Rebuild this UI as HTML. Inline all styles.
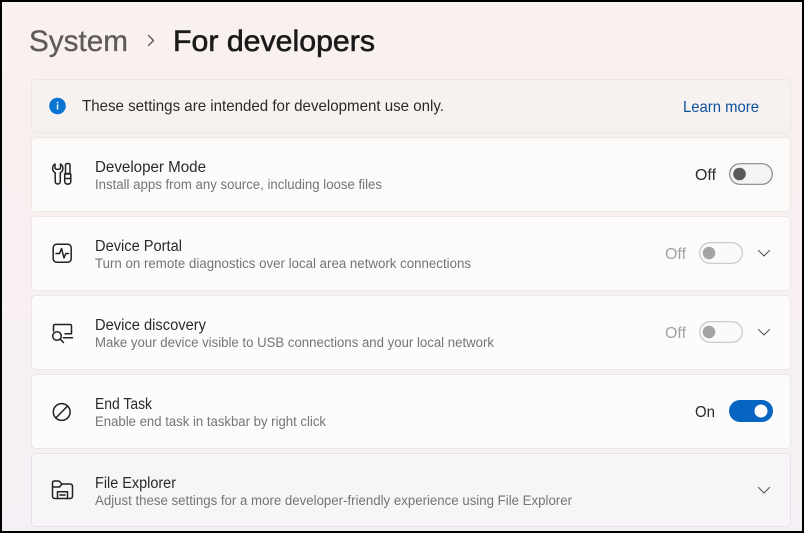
<!DOCTYPE html>
<html><head><meta charset="utf-8">
<style>
html,body{margin:0;padding:0;width:804px;height:533px;overflow:hidden;background:#000}
svg{display:block}
text{font-family:"Liberation Sans",sans-serif}
.t{font-size:15.500px;fill:#2a2a2a}
.s{font-size:13.500px;fill:#757575}
.i{fill:none;stroke:#222;stroke-width:1.500;stroke-linecap:round;stroke-linejoin:round}
.c{fill:none;stroke:#555;stroke-width:1.100;stroke-linecap:round;stroke-linejoin:round}
</style></head><body>
<svg width="804" height="533" viewBox="0 0 804 533" xmlns="http://www.w3.org/2000/svg">
<defs>
<linearGradient id="bg" x1="0" y1="0" x2="0" y2="1">
<stop offset="0" stop-color="#f8f1ee"/><stop offset=".5" stop-color="#f8f0f0"/><stop offset="1" stop-color="#f5f0f5"/>
</linearGradient>
</defs>
<rect x="0" y="0" width="804" height="533" fill="#000"/>
<rect x="2" y="2" width="800" height="529" fill="url(#bg)"/>

<text x="29" y="51" font-size="30" fill="#5e5a59" stroke="#5e5a59" stroke-width=".3" textLength="99" lengthAdjust="spacingAndGlyphs">System</text>
<path d="M148.500 35.500 L153.500 40.500 L148.500 45.500" fill="none" stroke="#555" stroke-width="1.300" stroke-linecap="round" stroke-linejoin="round"/>
<text x="173" y="51" font-size="30" fill="#1b1a1a" stroke="#1b1a1a" stroke-width=".6" textLength="202" lengthAdjust="spacingAndGlyphs">For developers</text>

<!-- cards -->
<rect x="31.500" y="79.500" width="759" height="53" rx="4" fill="#f6f2f0" stroke="#ece8e6"/>
<rect x="31.500" y="137.500" width="759" height="74" rx="4" fill="#fdfbfa" stroke="#ece8e6"/>
<rect x="31.500" y="216.500" width="759" height="74" rx="4" fill="#fdfafa" stroke="#ece8e8"/>
<rect x="31.500" y="295.500" width="759" height="74" rx="4" fill="#fdfbfc" stroke="#ece8ea"/>
<rect x="31.500" y="374.500" width="759" height="74" rx="4" fill="#fcfbfd" stroke="#e9e6ea"/>
<rect x="31.500" y="453.500" width="759" height="73" rx="4" fill="#f7f5f8" stroke="#e6e3e8"/>

<!-- info -->
<circle cx="57.500" cy="106" r="8.300" fill="#0a74d2"/>
<rect x="56.800" y="104.500" width="1.500" height="5" fill="#fff"/>
<rect x="56.800" y="101.800" width="1.500" height="1.500" fill="#fff"/>
<text x="82" y="111" font-size="16" fill="#2a2a2a" textLength="362" lengthAdjust="spacingAndGlyphs">These settings are intended for development use only.</text>
<text x="683" y="112" font-size="16" fill="#0b4f9e" textLength="76" lengthAdjust="spacingAndGlyphs">Learn more</text>

<!-- Developer Mode -->
<path class="i" d="M55 164 C53 165 52.300 167.500 52.700 169.500 C53 171 54 172 55.200 172.800 L55.200 181.500 C55.200 184.800 60.300 184.800 60.300 181.500 L60.300 172.800 C61.500 172 62.500 171 62.800 169.500 C63.200 167.500 62.500 165 60.500 164 L60.500 168 C60.500 169.800 55 169.800 55 168 Z"/>
<path class="i" d="M65.500 165 C65.500 163 70 163 70 165 L70 173.500 L65.500 173.500 Z M64.700 174 L70.800 174 L70.800 181.500 C70.800 185 64.700 185 64.700 181.500 Z M64.700 178.500 L70.800 178.500"/>
<text class="t" x="95" y="172" textLength="111" lengthAdjust="spacingAndGlyphs">Developer Mode</text>
<text class="s" x="95" y="189" textLength="287" lengthAdjust="spacingAndGlyphs">Install apps from any source, including loose files</text>
<text x="695" y="180" font-size="16" fill="#2a2a2a" textLength="21" lengthAdjust="spacingAndGlyphs">Off</text>
<rect x="729.700" y="163.700" width="42.600" height="20.600" rx="10.300" fill="#f5f4f3" stroke="#8a8887" stroke-width="1.200"/>
<circle cx="739.500" cy="174" r="6.300" fill="#5c5a59"/>

<!-- Device Portal -->
<rect class="i" x="53.200" y="244.200" width="18" height="18" rx="3.500"/>
<path class="i" d="M56 253.500 L59.500 253.500 L61.500 248.500 L64 258 L65.800 253.500 L68.500 253.500" stroke-width="1.200"/>
<text class="t" x="95" y="251" textLength="87" lengthAdjust="spacingAndGlyphs">Device Portal</text>
<text class="s" x="95" y="268" textLength="376" lengthAdjust="spacingAndGlyphs">Turn on remote diagnostics over local area network connections</text>
<text x="665" y="259" font-size="16" fill="#a3a2a2" textLength="21" lengthAdjust="spacingAndGlyphs">Off</text>
<rect x="699.700" y="242.700" width="42.600" height="20.600" rx="10.300" fill="#fbf9f9" stroke="#c8c6c6" stroke-width="1.200"/>
<circle cx="709" cy="253" r="6.300" fill="#a5a4a4"/>
<path class="c" d="M758.500 250.500 L764 256 L769.500 250.500"/>

<!-- Device discovery -->
<path class="i" d="M53.500 331 L53.500 326 Q53.500 324.500 55 324.500 L70 324.500 Q71.500 324.500 71.500 326 L71.500 333.800 L65 333.800"/>
<circle class="i" cx="57" cy="336" r="4.300"/>
<path class="i" d="M60.200 339.200 L63.500 342.500 M63.500 337.800 L72.500 337.800"/>
<text class="t" x="95" y="330" textLength="111" lengthAdjust="spacingAndGlyphs">Device discovery</text>
<text class="s" x="95" y="347" textLength="399" lengthAdjust="spacingAndGlyphs">Make your device visible to USB connections and your local network</text>
<text x="665" y="338" font-size="16" fill="#a3a2a2" textLength="21" lengthAdjust="spacingAndGlyphs">Off</text>
<rect x="699.700" y="321.700" width="42.600" height="20.600" rx="10.300" fill="#fbf9fa" stroke="#c8c6c6" stroke-width="1.200"/>
<circle cx="709" cy="332" r="6.300" fill="#a5a4a4"/>
<path class="c" d="M758.500 329.500 L764 335 L769.500 329.500"/>

<!-- End Task -->
<circle class="i" cx="61.700" cy="412" r="8.400"/>
<path class="i" d="M55.900 417.900 L67.500 406.100"/>
<text class="t" x="95" y="409" textLength="57" lengthAdjust="spacingAndGlyphs">End Task</text>
<text class="s" x="95" y="426" textLength="231" lengthAdjust="spacingAndGlyphs">Enable end task in taskbar by right click</text>
<text x="695" y="417" font-size="16" fill="#2a2a2a" textLength="20" lengthAdjust="spacingAndGlyphs">On</text>
<rect x="729" y="400" width="44" height="22" rx="11" fill="#0565c0"/>
<circle cx="761" cy="411" r="6.500" fill="#fff"/>

<!-- File Explorer -->
<path class="i" d="M52.500 483 Q52.500 481 54.500 481 L59 481 L62 484 L70 484 Q72.500 484 72.500 486.500 L72.500 496 Q72.500 498.500 70 498.500 L55 498.500 Q52.500 498.500 52.500 496 Z M52.500 487 L59.500 487 L62 484"/>
<path class="i" d="M57.500 498.500 L57.500 491.800 L67.500 491.800 L67.500 498.500 M60 495 L65 495"/>
<text class="t" x="95" y="488" textLength="81" lengthAdjust="spacingAndGlyphs">File Explorer</text>
<text class="s" x="95" y="505" textLength="477" lengthAdjust="spacingAndGlyphs">Adjust these settings for a more developer-friendly experience using File Explorer</text>
<path class="c" d="M758.500 487.500 L764 493 L769.500 487.500"/>
</svg>
</body></html>
